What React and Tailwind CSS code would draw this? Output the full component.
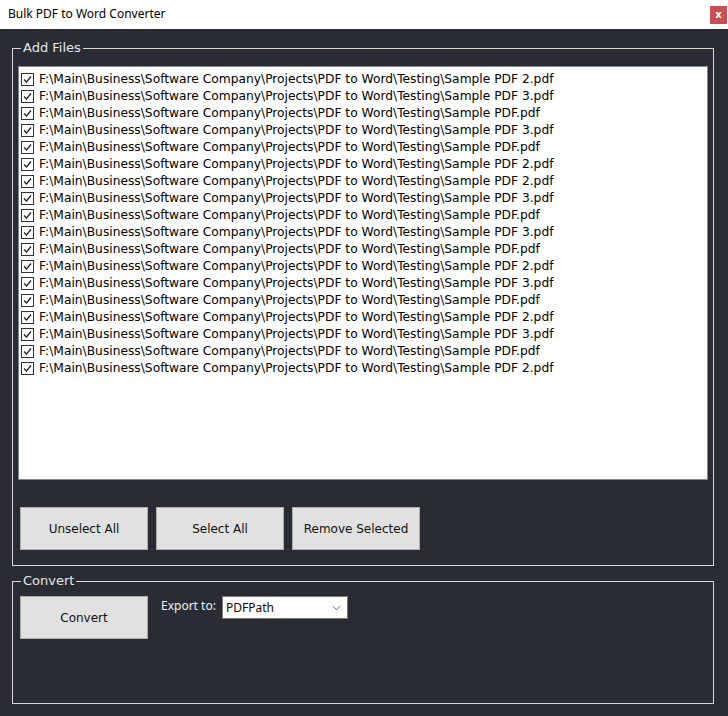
import React from "react";

const base = "F:\\Main\\Business\\Software Company\\Projects\\PDF to Word\\Testing\\";
const names = [
  "Sample PDF 2.pdf", "Sample PDF 3.pdf", "Sample PDF.pdf", "Sample PDF 3.pdf",
  "Sample PDF.pdf", "Sample PDF 2.pdf", "Sample PDF 2.pdf", "Sample PDF 3.pdf",
  "Sample PDF.pdf", "Sample PDF 3.pdf", "Sample PDF.pdf", "Sample PDF 2.pdf",
  "Sample PDF 3.pdf", "Sample PDF.pdf", "Sample PDF 2.pdf", "Sample PDF 3.pdf",
  "Sample PDF.pdf", "Sample PDF 2.pdf",
];

const gothic = "font-['DejaVu_Sans',sans-serif]";

function Check() {
  return (
    <span className="flex h-[13px] w-[13px] shrink-0 items-center justify-center border border-[#333] bg-white">
      <svg viewBox="0 0 11 11" className="h-[11px] w-[11px]" fill="none" stroke="#222" strokeWidth="1.3">
        <path d="M2 5.5 L4.5 8 L9 2.5" />
      </svg>
    </span>
  );
}

function WinButton({ children, className = "" }) {
  return (
    <button className={`h-[43px] w-[128px] border border-[#adadad] bg-[#e1e1e1] text-[12px] text-[#111] ${gothic} ${className}`}>
      {children}
    </button>
  );
}

export default function App() {
  return (
    <div className="flex h-[716px] w-[728px] flex-col bg-[#292c34]">
      {/* Title bar */}
      <div className="flex h-[29px] items-start justify-between bg-white">
        <span className="pl-[8px] pt-[6px] font-['Noto_Sans',sans-serif] text-[12px] leading-[16px] text-black">
          Bulk PDF to Word Converter
        </span>
        <span className="mt-[6px] mr-[1px] flex h-[18px] w-[17px] items-center justify-center bg-[#c75050] font-['DejaVu_Sans',sans-serif] text-[10px] font-bold leading-none text-white">
          x
        </span>
      </div>

      {/* Add Files */}
      <fieldset className="mt-[11px] ml-[12px] h-[526px] w-[702px] border border-[#d8d8d8] px-[5px]">
        <legend className={`ml-[3px] px-[2px] text-[13px] leading-[16px] text-[#e6e6e6] ${gothic}`}>Add Files</legend>
        <div className="mt-[10px] h-[414px] w-[690px] border border-[#828790] bg-white pt-[4px] pl-[2px]">
          {names.map((n, i) => (
            <div key={i} className="flex h-[17px] items-center gap-[5px]">
              <Check />
              <span className={`whitespace-nowrap text-[12.25px] leading-[17px] text-black ${gothic}`}>{base + n}</span>
            </div>
          ))}
        </div>
        <div className="mt-[27px] flex gap-[8px] pl-[2px]">
          <WinButton>Unselect All</WinButton>
          <WinButton>Select All</WinButton>
          <WinButton>Remove Selected</WinButton>
        </div>
      </fieldset>

      {/* Convert */}
      <fieldset className="mt-[7px] ml-[12px] h-[131px] w-[702px] border border-[#d8d8d8] px-[7px]">
        <legend className={`ml-[1px] px-[2px] text-[13px] leading-[16px] text-[#e6e6e6] ${gothic}`}>Convert</legend>
        <div className="mt-[7px] flex items-start">
          <WinButton>Convert</WinButton>
          <span className="ml-[13px] mt-[2px] font-['Noto_Sans',sans-serif] text-[12px] leading-[16px] text-[#f0f0f0]">Export to:</span>
          <div className="ml-[6px] flex h-[23px] w-[126px] items-center justify-between border border-[#7a7a7a] bg-white pl-[3px] pr-[6px]">
            <span className="font-['Noto_Sans',sans-serif] text-[12px] text-[#1a0000]">PDFPath</span>
            <svg viewBox="0 0 10 6" className="h-[6px] w-[9px]" fill="none" stroke="#555" strokeWidth="1">
              <path d="M1 1 L5 5 L9 1" />
            </svg>
          </div>
        </div>
      </fieldset>
    </div>
  );
}
